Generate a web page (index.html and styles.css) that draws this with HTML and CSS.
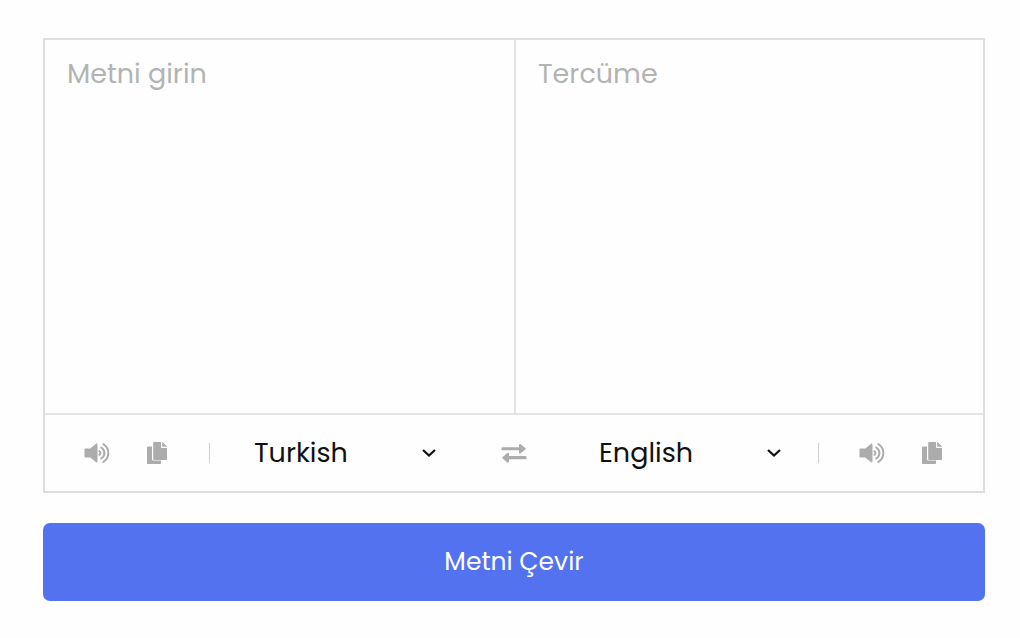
FILE: index.html
```html
<!DOCTYPE html>
<html lang="tr">
<head>
<meta charset="utf-8">
<meta name="viewport" content="width=device-width, initial-scale=1">
<title>Metni Çevir</title>
<link rel="stylesheet" href="styles.css">
</head>
<body>
<svg class="sprite" aria-hidden="true">
  <symbol id="volume" viewBox="0 0 26 22">
    <path fill="currentColor" d="M1.600 6.500h4.700l5.500-4.600c.8-.6 1.700-.2 1.700.8v16.600c0 1-.9 1.400-1.700.8L6.300 15.500H1.600c-.7 0-1.100-.4-1.100-1v-7c0-.6.400-1 1.100-1z"/>
    <g fill="none" stroke="currentColor" stroke-width="2" stroke-linecap="round">
      <path d="M15.300 9.200c1.500.9 1.500 2.700 0 3.600"/>
      <path d="M17.200 5.500c4.300 2.700 4.300 8.300 0 11"/>
      <path d="M19.300 2c6.700 4.500 6.700 13.500 0 18"/>
    </g>
  </symbol>
  <symbol id="copy" viewBox="0 0 20 22">
    <path fill="currentColor" d="M1 4.500h4V17c0 1 .6 1.600 1.600 1.600H14V21c0 .6-.4 1-1 1H1c-.6 0-1-.4-1-1V5.500c0-.6.4-1 1-1z"/>
    <path fill="currentColor" d="M7.200 0H14v5c0 .6.400 1 1 1h5v11c0 .6-.4 1-1 1H7.200c-.6 0-1-.4-1-1V1c0-.6.4-1 1-1z"/>
    <path fill="currentColor" d="M15.200 0c.4 0 .6.200.8.400l3.600 3.600c.2.200.4.400.4.800h-4.800z"/>
  </symbol>
  <symbol id="exchange" viewBox="0 0 26 20">
    <path fill="currentColor" d="M1.500 4.200H18V2c0-1 1-1.400 1.700-.8l4.600 3.900c.6.500.6 1 0 1.500l-4.600 3.700C19 11 18 10.500 18 9.500V7.300H1.500C.8 7.300.5 6.900.5 6.400V5.100c0-.5.3-.9 1-.9zM24.500 13.100H8V11c0-1-1-1.500-1.700-.9l-4.600 3.900c-.6.500-.6 1 0 1.500l4.600 3.900c.7.600 1.700.1 1.700-.9v-2.300h16.500c.7 0 1-.4 1-.9V14c0-.5-.3-.9-1-.9z"/>
  </symbol>
  <symbol id="chevron" viewBox="0 0 16 10">
    <path fill="none" stroke="currentColor" stroke-width="2.300" d="M2 2l6 5.500L14 2"/>
  </symbol>
</svg>
<main class="container">
  <form class="translator">
    <div class="panel">
      <div class="texts">
        <textarea class="text" placeholder="Metni girin" aria-label="Metni girin"></textarea>
        <textarea class="text" placeholder="Tercüme" aria-label="Tercüme" readonly></textarea>
      </div>
      <div class="controls">
        <div class="icons icons-from">
          <button class="icon-button" type="button" aria-label="Metni dinle"><svg class="icon-volume"><use href="#volume"/></svg></button>
          <button class="icon-button" type="button" aria-label="Metni kopyala"><svg class="icon-copy"><use href="#copy"/></svg></button>
        </div>
        <div class="language language-from">
          <select class="select" aria-label="Kaynak dil"><option>Turkish</option><option>English</option></select>
          <svg class="chevron" aria-hidden="true"><use href="#chevron"/></svg>
        </div>
        <button class="icon-button" type="button" aria-label="Dilleri değiştir"><svg class="icon-exchange"><use href="#exchange"/></svg></button>
        <div class="language language-to">
          <select class="select" aria-label="Hedef dil"><option>English</option><option>Turkish</option></select>
          <svg class="chevron" aria-hidden="true"><use href="#chevron"/></svg>
        </div>
        <div class="icons icons-to">
          <button class="icon-button" type="button" aria-label="Tercümeyi dinle"><svg class="icon-volume"><use href="#volume"/></svg></button>
          <button class="icon-button" type="button" aria-label="Tercümeyi kopyala"><svg class="icon-copy"><use href="#copy"/></svg></button>
        </div>
      </div>
    </div>
    <button class="submit" type="button">Metni Çevir</button>
  </form>
</main>
</body>
</html>
```
FILE: styles.css
```css
* {
  box-sizing: border-box;
}

body {
  margin: 0;
  background: #fefefe;
  font-family: Poppins, Inter, "Open Sans", sans-serif;
  font-size: 27px;
  line-height: 36px;
}

button,
select,
textarea {
  margin: 0;
  border: 0;
  padding: 0;
  background: none;
  font: inherit;
}

.sprite {
  display: none;
}

.container {
  padding: 38px 35px 32px 43px;
}

.translator {
  display: grid;
  gap: 30px;
}

.panel {
  border: 2px solid #dedede;
}

.texts {
  display: grid;
  grid-template-columns: 1fr 1fr;
  border-bottom: 2px solid #e4e4e4;
}

.text {
  display: block;
  width: 100%;
  height: 373px;
  padding: 16px 22px;
  resize: none;
  outline: none;
}

.text + .text {
  border-left: 2px solid #e4e4e4;
}

.text::placeholder {
  color: #b3b3b3;
  opacity: 1;
}

.controls {
  display: grid;
  grid-template-columns: auto 1fr auto 1fr auto;
  align-items: center;
  padding: 20px 41px 20px 39px;
}

.icons {
  display: flex;
  align-items: center;
  gap: 37px;
  height: 20px;
}

.icons-from {
  padding-right: 42px;
  border-right: 1px solid #cfcfcf;
}

.icons-to {
  padding-left: 40px;
  border-left: 1px solid #cfcfcf;
}

.icon-button {
  display: flex;
  color: #acacac;
  cursor: pointer;
}

.icon-volume {
  width: 26px;
  height: 22px;
}

.icon-copy {
  width: 20px;
  height: 22px;
}

.icon-exchange {
  width: 26px;
  height: 20px;
}

.language {
  display: grid;
  align-items: center;
}

.language-from {
  margin: 0 64px 0 44px;
}

.language-to {
  margin: 0 36px 0 72px;
}

.select,
.chevron {
  grid-area: 1 / 1;
}

.select {
  width: 100%;
  appearance: none;
  color: #111;
  cursor: pointer;
}

.chevron {
  justify-self: end;
  width: 16px;
  height: 10px;
  color: #111;
  pointer-events: none;
}

.submit {
  padding: 21px;
  border-radius: 7px;
  background: #5372f0;
  color: #fff;
  font-size: 25px;
  cursor: pointer;
}
```
